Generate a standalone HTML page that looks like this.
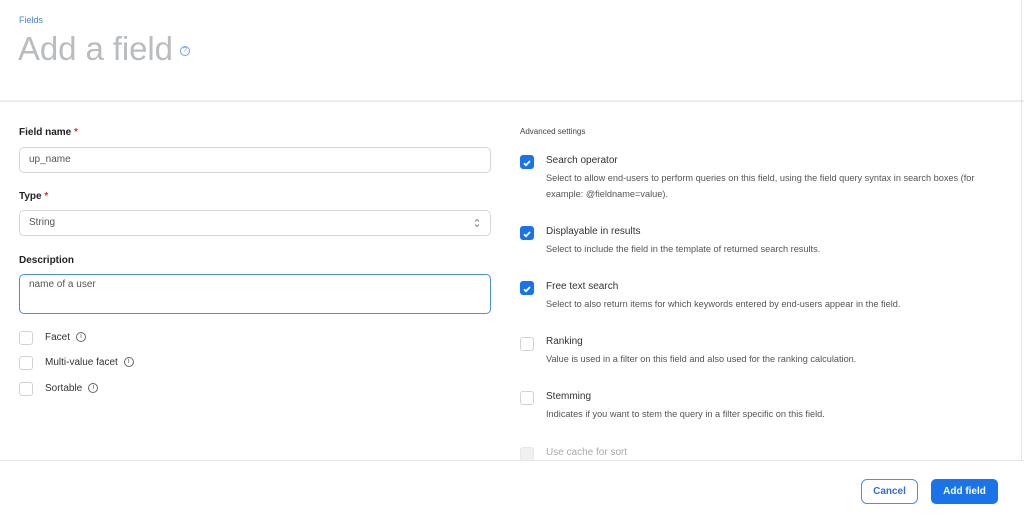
<!DOCTYPE html>
<html><head><style>
*{box-sizing:border-box;margin:0;padding:0}
body{width:1024px;height:521px;background:#fff;font-family:"Liberation Sans",sans-serif;position:relative;overflow:hidden;color:#333}
.a{position:absolute}
.lbl{font-size:10px;font-weight:bold;color:#222}
.req{color:#e0303a}
.inp{position:absolute;left:19px;width:472px;border:1px solid #d6d6d6;border-radius:5px;font-size:10px;color:#555;padding-left:9px}
.cb{position:absolute;width:14px;height:14px;border:1px solid #d2d2d2;border-radius:3px;background:#fff}
.cb.on{background:#1a73e8;border-color:#1a73e8}
.t{position:absolute;font-size:10px;color:#333}
.d{position:absolute;font-size:9.2px;color:#555;line-height:16px}
.i{display:inline-block;width:10px;height:10px;border:1px solid #666;border-radius:50%;font-size:7px;text-align:center;line-height:8px;color:#555;vertical-align:middle;margin-left:6px}
</style></head><body>
<div class="a" style="left:19px;top:15px;font-size:9px;color:#4a7ce6">Fields</div>
<div class="a" style="left:18px;top:30px;font-size:33px;color:#b9bdc1;letter-spacing:-0.1px">Add a field</div>
<div class="a" style="left:180px;top:46px;width:10px;height:10px;border:1.5px solid #6aa0f0;border-radius:50%;font-size:7px;color:#6aa0f0;text-align:center;line-height:7px">?</div>
<div class="a" style="left:0;top:100px;width:1024px;height:2px;background:#ececec"></div>

<div class="a lbl" style="left:19px;top:127px">Field name <span class="req">*</span></div>
<div class="inp" style="top:147px;height:26px;line-height:24px">up_name</div>
<div class="a lbl" style="left:19px;top:191px">Type <span class="req">*</span></div>
<div class="inp" style="top:210px;height:26px;line-height:24px">String<svg style="position:absolute;right:10px;top:7px" width="6" height="10" viewBox="0 0 6 10"><path d="M1 3.5L3 1.5 5 3.5M1 6.5L3 8.5 5 6.5" stroke="#888" fill="none"/></svg></div>
<div class="a lbl" style="left:19px;top:255px">Description</div>
<div class="inp" style="top:274px;height:40px;border-color:#4a8eea;padding-top:4px">name of a user</div>

<div class="cb" style="left:19px;top:331px"></div><div class="t" style="left:45px;top:332px">Facet<span class="i">i</span></div>
<div class="cb" style="left:19px;top:356px"></div><div class="t" style="left:45px;top:357px">Multi-value facet<span class="i">i</span></div>
<div class="cb" style="left:19px;top:382px"></div><div class="t" style="left:45px;top:383px">Sortable<span class="i">i</span></div>

<div class="a" style="left:520px;top:127px;font-size:8px;color:#444">Advanced settings</div>
<div class="cb on" style="left:520px;top:155px"><svg width="12" height="12" viewBox="0 0 12 12"><path d="M3 6.2l2 2 4-4.2" stroke="#fff" stroke-width="1.8" fill="none"/></svg></div>
<div class="t" style="left:546px;top:155px">Search operator</div>
<div class="d" style="left:546px;top:170px">Select to allow end-users to perform queries on this field, using the field query syntax in search boxes (for<br>example: @fieldname=value).</div>
<div class="cb on" style="left:520px;top:226px"><svg width="12" height="12" viewBox="0 0 12 12"><path d="M3 6.2l2 2 4-4.2" stroke="#fff" stroke-width="1.8" fill="none"/></svg></div>
<div class="t" style="left:546px;top:226px">Displayable in results</div>
<div class="d" style="left:546px;top:241px">Select to include the field in the template of returned search results.</div>
<div class="cb on" style="left:520px;top:281px"><svg width="12" height="12" viewBox="0 0 12 12"><path d="M3 6.2l2 2 4-4.2" stroke="#fff" stroke-width="1.8" fill="none"/></svg></div>
<div class="t" style="left:546px;top:281px">Free text search</div>
<div class="d" style="left:546px;top:296px">Select to also return items for which keywords entered by end-users appear in the field.</div>
<div class="cb" style="left:520px;top:337px"></div>
<div class="t" style="left:546px;top:336px">Ranking</div>
<div class="d" style="left:546px;top:351px">Value is used in a filter on this field and also used for the ranking calculation.</div>
<div class="cb" style="left:520px;top:391px"></div>
<div class="t" style="left:546px;top:391px">Stemming</div>
<div class="d" style="left:546px;top:406px">Indicates if you want to stem the query in a filter specific on this field.</div>
<div class="cb" style="left:520px;top:447px;background:#f0f0f0;border-color:#e6e6e6"></div>
<div class="t" style="left:546px;top:447px;color:#aaa">Use cache for sort</div>

<div class="a" style="left:0;top:460px;width:1024px;height:1px;background:#e6e6e6"></div>
<div class="a" style="left:1021px;top:0;width:1px;height:460px;background:#e2e2e2"></div>
<div class="a" style="left:861px;top:479px;width:57px;height:25px;border:1px solid #4a8eea;border-radius:6px;color:#2d6fd9;font-size:10px;font-weight:bold;text-align:center;line-height:24px">Cancel</div>
<div class="a" style="left:931px;top:479px;width:67px;height:25px;background:#1a73e8;border-radius:5px;color:#fff;font-size:10px;font-weight:bold;text-align:center;line-height:25px">Add field</div>
</body></html>
